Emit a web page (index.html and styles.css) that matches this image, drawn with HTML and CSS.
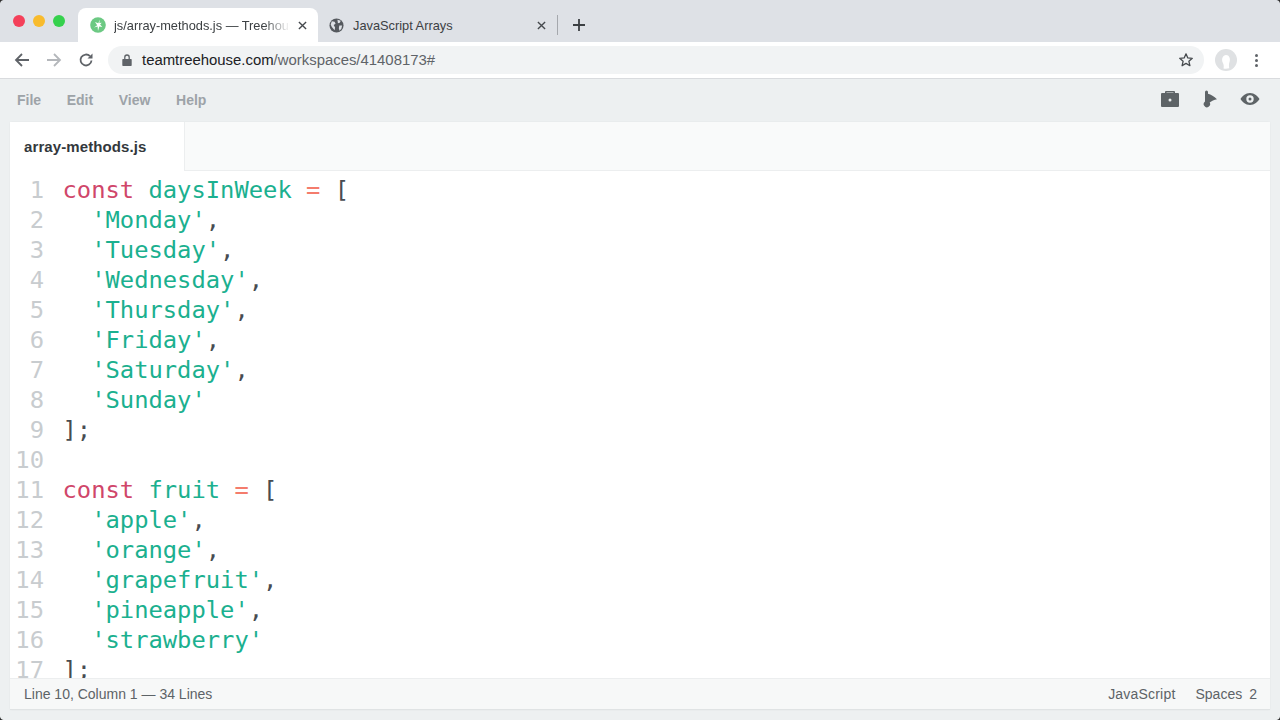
FILE: index.html
```html
<!DOCTYPE html>
<html lang="en">
<head>
<meta charset="utf-8">
<title>js/array-methods.js — Treehouse</title>
<link rel="stylesheet" href="styles.css">
</head>
<body>
<div class="page">
  <header class="tabstrip">
    <div class="lights"><span class="light red"></span><span class="light yellow"></span><span class="light green"></span></div>
    <div class="tab active">
      <svg class="favicon" viewBox="0 0 16 16"><circle cx="8" cy="8" r="7.800" fill="#6cc983"/><path d="M9.800 2.500L8.300 6.300 5 5l2.200 3.200L4 10.500l3.600-.9L8 14l1.300-4.600 3 .6-2.200-2.500 1.600-1.800-2.300.4z" fill="#fff"/></svg>
      <span class="tab-title fade">js/array-methods.js — Treehouse</span>
      <svg class="close" viewBox="0 0 10 10"><path d="M1 1l8 8M9 1l-8 8"/></svg>
    </div>
    <div class="tab inactive">
      <svg class="globe" viewBox="0 0 16 16"><circle cx="8" cy="8" r="7.500" fill="#55595e"/><path d="M3 3.500l3 .5 1 2-2 1.500 1.500 2.500-.5 3L3 9.500 1.800 7zM9 1.800l3.500 1-1 2.200-2 .5zM11 8h3l-.8 3.500-2 2-.7-2.500z" fill="#dee1e6"/></svg>
      <span class="tab-title">JavaScript Arrays</span>
      <svg class="close" viewBox="0 0 10 10"><path d="M1 1l8 8M9 1l-8 8"/></svg>
    </div>
    <span class="tab-sep"></span>
    <svg class="newtab" viewBox="0 0 12 12"><path d="M6 0v12M0 6h12"/></svg>
  </header>

  <nav class="toolbar">
    <svg class="nav-icon" viewBox="0 0 16 16"><path d="M15 8H2M8 2L2 8l6 6"/></svg>
    <svg class="nav-icon dim" viewBox="0 0 16 16"><path d="M1 8h13M8 2l6 6-6 6"/></svg>
    <svg class="nav-icon reload" viewBox="0 0 16 16"><path d="M13.500 8.500A5.500 5.500 0 1 1 12 4.200"/><path class="solid" d="M14.500 1.500v5h-5z"/></svg>
    <div class="omnibox">
      <svg class="lock" viewBox="0 0 10 12"><path d="M1 5h8a.7.7 0 0 1 .7.7v5.600a.7.7 0 0 1-.7.7H1a.7.7 0 0 1-.7-.7V5.700A.7.7 0 0 1 1 5z" fill="#5f6368"/><path d="M2.800 5V3.200a2.200 2.200 0 0 1 4.400 0V5" fill="none" stroke="#5f6368" stroke-width="1.300"/></svg>
      <span class="url"><span class="host">teamtreehouse.com</span>/workspaces/41408173#</span>
      <svg class="star" viewBox="0 0 16 16"><path d="M8 1.800l1.800 4.100 4.500.4-3.400 3 1 4.400L8 11.400l-3.900 2.300 1-4.400-3.400-3 4.500-.4z"/></svg>
    </div>
    <div class="avatar"><svg viewBox="0 0 22 22"><circle cx="11" cy="11" r="11" fill="#dfe1e3"/><path d="M8.500 19.500c.5-2 .3-4-.8-6-1.500-3.500.2-7.500 3.300-7.500s4.800 3.500 3.500 7c-.7 2-.7 4-.2 6.300-1.800.5-4 .6-5.800.2z" fill="#fff"/></svg></div>
    <div class="kebab"><i></i><i></i><i></i></div>
  </nav>

  <main class="workspace">
    <div class="menubar">
      <ul class="menu"><li>File</li><li>Edit</li><li>View</li><li>Help</li></ul>
      <div class="tools">
        <svg viewBox="0 0 20 18"><path fill-rule="evenodd" d="M6 1h8a1 1 0 0 1 1 1v1h3a1 1 0 0 1 1 1v12a1 1 0 0 1-1 1H2a1 1 0 0 1-1-1V4a1 1 0 0 1 1-1h3V2a1 1 0 0 1 1-1zM6.500 2.500V3h7v-.5zM10 8.500a1.500 1.500 0 1 0 0 3 1.500 1.500 0 0 0 0-3z"/></svg>
        <svg viewBox="0 0 20 18"><path d="M5 2a1.500 1.500 0 0 1 3 0v1.800c3 .6 6 2.700 9 5.400-2.800.4-5.500 1.700-7.300 3.300A3.200 3.200 0 1 1 5 11.500z"/></svg>
        <svg viewBox="0 0 20 18"><path fill-rule="evenodd" d="M10 3c4.500 0 8 3.300 9.500 6-1.500 2.700-5 6-9.500 6S2 11.700.5 9C2 6.300 5.500 3 10 3zm0 2.300a3.700 3.700 0 1 0 0 7.400 3.700 3.700 0 0 0 0-7.400zM10 7.500a1.500 1.500 0 1 1 0 3 1.500 1.500 0 0 1 0-3z"/></svg>
      </div>
    </div>

    <section class="panel">
      <div class="filetabs">
        <div class="filetab">array-methods.js</div>
      </div>
      <div class="code">
        <div class="line"><span class="ln">1</span><code class="src"><span class="kw">const</span> <span class="st">daysInWeek</span> <span class="op">=</span> [</code></div>
        <div class="line"><span class="ln">2</span><code class="src">  <span class="st">'Monday'</span>,</code></div>
        <div class="line"><span class="ln">3</span><code class="src">  <span class="st">'Tuesday'</span>,</code></div>
        <div class="line"><span class="ln">4</span><code class="src">  <span class="st">'Wednesday'</span>,</code></div>
        <div class="line"><span class="ln">5</span><code class="src">  <span class="st">'Thursday'</span>,</code></div>
        <div class="line"><span class="ln">6</span><code class="src">  <span class="st">'Friday'</span>,</code></div>
        <div class="line"><span class="ln">7</span><code class="src">  <span class="st">'Saturday'</span>,</code></div>
        <div class="line"><span class="ln">8</span><code class="src">  <span class="st">'Sunday'</span></code></div>
        <div class="line"><span class="ln">9</span><code class="src">];</code></div>
        <div class="line"><span class="ln">10</span><code class="src"></code></div>
        <div class="line"><span class="ln">11</span><code class="src"><span class="kw">const</span> <span class="st">fruit</span> <span class="op">=</span> [</code></div>
        <div class="line"><span class="ln">12</span><code class="src">  <span class="st">'apple'</span>,</code></div>
        <div class="line"><span class="ln">13</span><code class="src">  <span class="st">'orange'</span>,</code></div>
        <div class="line"><span class="ln">14</span><code class="src">  <span class="st">'grapefruit'</span>,</code></div>
        <div class="line"><span class="ln">15</span><code class="src">  <span class="st">'pineapple'</span>,</code></div>
        <div class="line"><span class="ln">16</span><code class="src">  <span class="st">'strawberry'</span></code></div>
        <div class="line"><span class="ln">17</span><code class="src">];</code></div>
      </div>
      <footer class="statusbar">
        <span>Line 10, Column 1 — 34 Lines</span>
        <span class="status-right"><span class="lang">JavaScript</span><span class="spaces"><span>Spaces</span><span>2</span></span></span>
      </footer>
    </section>
  </main>
</div>
</body>
</html>
```

FILE: styles.css
```css
* { box-sizing: border-box; }
html, body { margin: 0; height: 100%; overflow: hidden; }
body { font-family: "Liberation Sans", Arial, sans-serif; background: #edf0f1; }
.page { position: relative; width: 1280px; height: 720px; display: flex; flex-direction: column; overflow: hidden; }
.page::after {
  content: "";
  position: absolute;
  inset: 0;
  pointer-events: none;
  background:
    radial-gradient(circle at 100% 100%, transparent 3.500px, #2b2b2b 4.500px) 0 0 / 4px 4px no-repeat,
    radial-gradient(circle at 0 100%, transparent 3.500px, #2b2b2b 4.500px) 100% 0 / 4px 4px no-repeat,
    radial-gradient(circle at 100% 0, transparent 3.500px, #2b2b2b 4.500px) 0 100% / 4px 4px no-repeat,
    radial-gradient(circle at 0 0, transparent 3.500px, #2b2b2b 4.500px) 100% 100% / 4px 4px no-repeat;
}

.tabstrip { height: 42px; flex: none; background: #dee1e6; display: flex; align-items: flex-end; }
.lights { width: 78px; height: 42px; padding: 15px 0 0 13px; display: flex; gap: 8px; flex: none; }
.light { width: 12px; height: 12px; border-radius: 50%; }
.red { background: #f4405a; }
.yellow { background: #f8bb2d; }
.green { background: #35d14d; }
.tab { height: 34px; display: flex; align-items: center; flex: none; font-size: 12.800px; color: #3c4043; }
.tab.active { width: 240px; background: #fff; border-radius: 8px 8px 0 0; padding: 0 11px 0 12px; }
.tab.inactive { width: 232px; padding: 0 4px 0 11px; }
.favicon { width: 16px; height: 16px; flex: none; margin-right: 8px; }
.globe { width: 15px; height: 15px; flex: none; margin-right: 9px; }
.tab-title { flex: 1; white-space: nowrap; overflow: hidden; min-width: 0; }
.fade { margin-right: 8px; -webkit-mask-image: linear-gradient(to right, #000 85%, transparent 100%); mask-image: linear-gradient(to right, #000 85%, transparent 100%); }
.close { width: 9px; height: 9px; flex: none; fill: none; stroke: #45494d; stroke-width: 1.500; }
.tab-sep { width: 1px; height: 20px; background: #a5a8ad; margin: 0 0 7px 7px; flex: none; }
.newtab { width: 12px; height: 12px; margin: 0 0 11px 15px; fill: none; stroke: #3c4043; stroke-width: 1.800; flex: none; }

.toolbar { height: 37px; flex: none; background: #fff; border-bottom: 1px solid #d9dbde; display: flex; align-items: center; padding: 0 0 0 14px; }
.nav-icon { width: 16px; height: 16px; fill: none; stroke: #5f6368; stroke-width: 1.800; flex: none; margin-right: 16px; }
.nav-icon.dim { stroke: #b4b7bb; }
.nav-icon.reload { margin-right: 14px; }
.solid { fill: #5f6368; stroke: none; }
.omnibox { width: 1096px; height: 28px; background: #f1f3f4; border-radius: 14px; display: flex; align-items: center; padding: 0 10px 0 14px; flex: none; }
.lock { width: 10px; height: 12px; flex: none; margin-right: 10px; }
.url { flex: 1; font-size: 14.900px; color: #5f6368; white-space: nowrap; }
.host { color: #202124; }
.star { width: 16px; height: 16px; fill: none; stroke: #45494d; stroke-width: 1.300; stroke-linejoin: round; flex: none; }
.avatar { width: 22px; height: 22px; margin-left: 11px; flex: none; }
.avatar svg { display: block; width: 22px; height: 22px; }
.kebab { margin-left: 18px; display: flex; flex-direction: column; gap: 2px; }
.kebab i { display: block; width: 3px; height: 3px; border-radius: 50%; background: #5f6368; }

.workspace { flex: 1; display: flex; flex-direction: column; padding: 0 10px 10px; min-height: 0; }
.menubar { height: 43px; flex: none; display: flex; align-items: center; justify-content: space-between; padding-bottom: 2px; }
.menu { list-style: none; margin: 0; padding: 0 0 0 7px; display: flex; gap: 25.600px; font-size: 14px; font-weight: 700; color: #9da3a8; }
.tools { display: flex; gap: 20px; padding-right: 10px; padding-bottom: 2px; }
.tools svg { width: 20px; height: 18px; fill: #5e6467; display: block; }

.panel { flex: 1; background: #fff; display: flex; flex-direction: column; min-height: 0; box-shadow: 0 0 2px rgba(0,0,0,.05); }
.filetabs { height: 49px; flex: none; background: #f9fafa; border-bottom: 1px solid #eceeef; }
.filetab { width: 175px; height: 49px; background: #fff; border-right: 1px solid #eceeef; padding: 0 14px; display: flex; align-items: center; font-size: 15px; font-weight: 700; color: #33383c; letter-spacing: .1px; }

.code { flex: 1; min-height: 0; overflow: hidden; padding-top: 4px; font-family: "DejaVu Sans Mono", monospace; font-size: 23.800px; line-height: 30px; }
.line { height: 30px; display: flex; }
.ln { width: 34px; flex: none; text-align: right; color: #c8cccf; }
.src { font: inherit; color: #484c51; white-space: pre; margin-left: 18.500px; }
.kw { color: #d0466a; }
.st { color: #1bb08f; }
.op { color: #f47c6c; }

.statusbar { height: 32px; flex: none; background: #f7f8f8; border-top: 1px solid #eceeef; border-bottom: 1px solid #e0e3e4; display: flex; align-items: center; justify-content: space-between; padding: 0 13px 1px 14px; font-size: 14px; color: #5d6367; }
.lang { letter-spacing: .2px; }
.status-right { display: flex; gap: 20px; }
.spaces { display: flex; gap: 7px; }
```
